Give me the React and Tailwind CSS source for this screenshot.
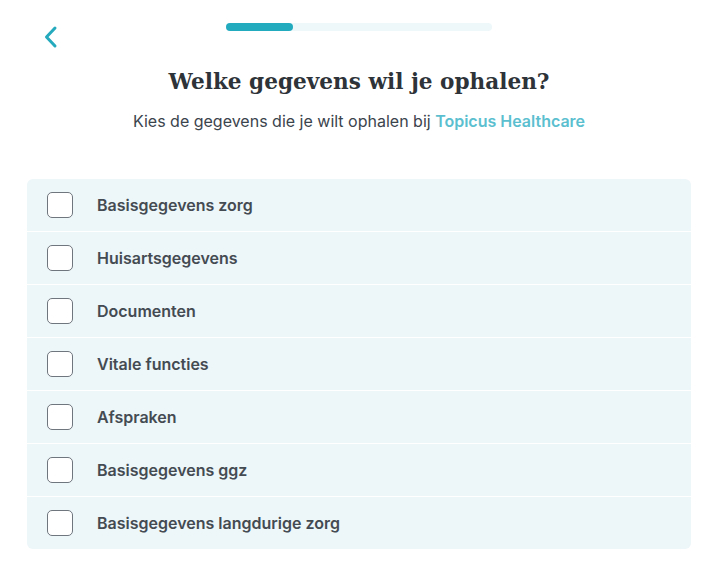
import React from 'react';

const items = [
  'Basisgegevens zorg',
  'Huisartsgegevens',
  'Documenten',
  'Vitale functies',
  'Afspraken',
  'Basisgegevens ggz',
  'Basisgegevens langdurige zorg',
];

export default function App() {
  return (
    <div className="min-h-screen bg-white px-[27px] font-['Inter',sans-serif] text-[#3b444d]">
      {/* top bar */}
      <div className="relative flex h-[54px] items-start justify-center pt-[23px]">
        <button className="absolute left-[14px] top-[25px] text-[#24a9bd]">
          <svg width="20" height="24" viewBox="0 0 20 24" fill="none">
            <path d="M14 3 L5.5 12 L14 21" stroke="currentColor" strokeWidth="3" strokeLinecap="round" strokeLinejoin="round" />
          </svg>
        </button>
        <div className="h-2 w-[266px] rounded-full bg-[#eef7f9]">
          <div className="h-2 w-[67px] rounded-full bg-[#22aabf]" />
        </div>
      </div>

      <h1 className="mt-[12px] text-center font-['DejaVu_Serif',serif] text-[21.6px] font-bold leading-[32px] text-[#2d3338]">
        Welke gegevens wil je ophalen?
      </h1>
      <p className="mt-[12px] text-center text-[16px] leading-[22px] text-[#3b444d]">
        Kies de gegevens die je wilt ophalen bij{' '}
        <span className="font-semibold text-[#5cbfd0]">Topicus Healthcare</span>
      </p>

      <ul className="mt-[47px] flex flex-col gap-px overflow-hidden rounded-md">
        {items.map((item) => (
          <li key={item} className="flex h-[52px] items-center bg-[#edf6f9] pl-5">
            <span className="h-[26px] w-[26px] rounded-[5px] border border-[#6f767d] bg-white" />
            <span className="ml-[24px] text-[16px] font-semibold text-[#444b52]">{item}</span>
          </li>
        ))}
      </ul>
    </div>
  );
}
